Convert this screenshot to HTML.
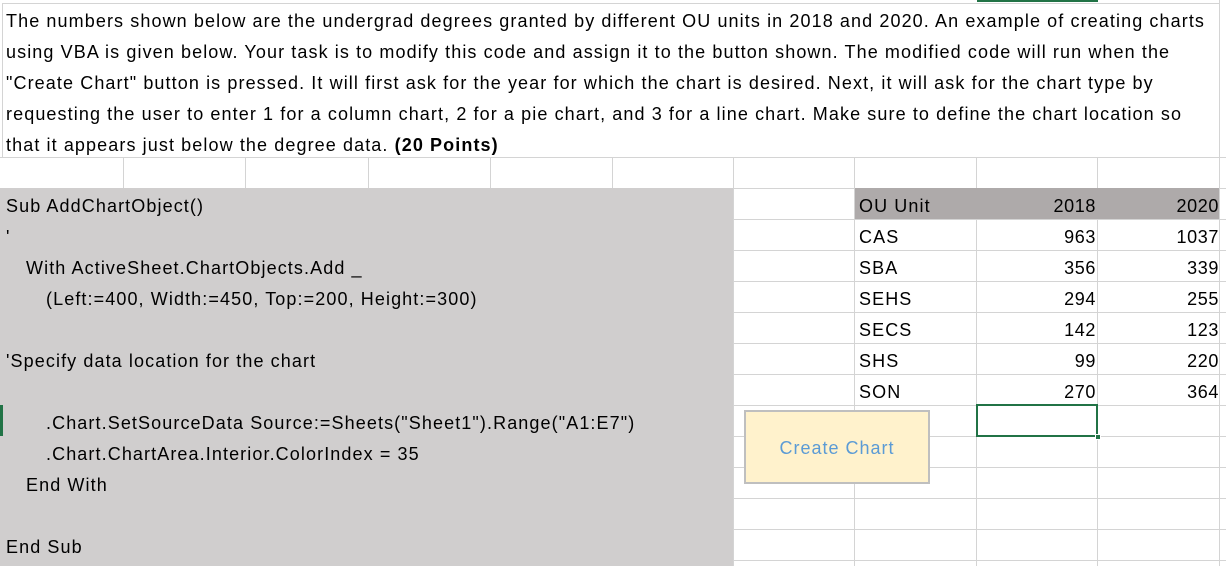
<!DOCTYPE html>
<html><head><meta charset="utf-8"><style>
*{margin:0;padding:0;box-sizing:border-box}
body{width:1226px;height:566px;overflow:hidden;background:#fff;position:relative;font-family:"Liberation Sans",sans-serif;font-size:18px;letter-spacing:1.1px;color:#000}
.a{position:absolute}
.vl{position:absolute;width:1px;background:#d4d4d4}
.hl{position:absolute;height:1px;background:#d4d4d4}
.t{position:absolute;left:6px;white-space:nowrap;line-height:31px}
.c{position:absolute;white-space:nowrap;line-height:31px}
.r{text-align:right;letter-spacing:0.6px}
</style></head><body>
<div class="hl" style="left:0;top:157px;width:1226px"></div>
<div class="hl" style="left:0;top:188px;width:1226px"></div>
<div class="vl" style="left:123px;top:157px;height:31px"></div>
<div class="vl" style="left:245px;top:157px;height:31px"></div>
<div class="vl" style="left:368px;top:157px;height:31px"></div>
<div class="vl" style="left:490px;top:157px;height:31px"></div>
<div class="vl" style="left:612px;top:157px;height:31px"></div>
<div class="vl" style="left:733px;top:157px;height:409px"></div>
<div class="vl" style="left:854px;top:157px;height:409px"></div>
<div class="vl" style="left:976px;top:157px;height:409px"></div>
<div class="vl" style="left:1097px;top:157px;height:409px"></div>
<div class="vl" style="left:1219px;top:0;height:566px"></div>
<div class="hl" style="left:733px;top:219px;width:493px"></div>
<div class="hl" style="left:733px;top:250px;width:493px"></div>
<div class="hl" style="left:733px;top:281px;width:493px"></div>
<div class="hl" style="left:733px;top:312px;width:493px"></div>
<div class="hl" style="left:733px;top:343px;width:493px"></div>
<div class="hl" style="left:733px;top:374px;width:493px"></div>
<div class="hl" style="left:733px;top:405px;width:493px"></div>
<div class="hl" style="left:733px;top:436px;width:493px"></div>
<div class="hl" style="left:733px;top:467px;width:493px"></div>
<div class="hl" style="left:733px;top:498px;width:493px"></div>
<div class="hl" style="left:733px;top:529px;width:493px"></div>
<div class="hl" style="left:733px;top:560px;width:493px"></div>
<div class="a" style="left:2px;top:3px;width:1218px;height:155px;border:1px solid #d4d4d4;background:#fff"></div>
<div class="a" style="left:977px;top:0;width:121px;height:2px;background:#217346"></div>
<div class="t" style="top:6px">The numbers shown below are the undergrad degrees granted by different OU units in 2018 and 2020. An example of creating charts</div>
<div class="t" style="top:37px">using VBA is given below. Your task is to modify this code and assign it to the button shown. The modified code will run when the</div>
<div class="t" style="top:68px">"Create Chart" button is pressed. It will first ask for the year for which the chart is desired. Next, it will ask for the chart type by</div>
<div class="t" style="top:99px">requesting the user to enter 1 for a column chart, 2 for a pie chart, and 3 for a line chart. Make sure to define the chart location so</div>
<div class="t" style="top:130px">that it appears just below the degree data. <b>(20 Points)</b></div>
<div class="a" style="left:0;top:188px;width:733px;height:378px;background:#d0cece"></div>
<div class="a" style="left:0;top:405px;width:3px;height:31px;background:#217346"></div>
<div class="c" style="left:6px;top:191px">Sub AddChartObject()</div>
<div class="c" style="left:6px;top:222px">'</div>
<div class="c" style="left:26px;top:253px">With ActiveSheet.ChartObjects.Add _</div>
<div class="c" style="left:46px;top:284px">(Left:=400, Width:=450, Top:=200, Height:=300)</div>
<div class="c" style="left:6px;top:346px">'Specify data location for the chart</div>
<div class="c" style="left:46px;top:408px">.Chart.SetSourceData Source:=Sheets("Sheet1").Range("A1:E7")</div>
<div class="c" style="left:46px;top:439px">.Chart.ChartArea.Interior.ColorIndex = 35</div>
<div class="c" style="left:26px;top:470px">End With</div>
<div class="c" style="left:6px;top:532px">End Sub</div>
<div class="a" style="left:855px;top:188px;width:364px;height:31px;background:#aeaaaa"></div>
<div class="c" style="left:859px;top:191px">OU Unit</div>
<div class="c r" style="left:976px;width:120px;top:191px">2018</div>
<div class="c r" style="left:1098px;width:121px;top:191px">2020</div>
<div class="c" style="left:859px;top:222px">CAS</div><div class="c r" style="left:976px;width:120px;top:222px">963</div><div class="c r" style="left:1098px;width:121px;top:222px">1037</div>
<div class="c" style="left:859px;top:253px">SBA</div><div class="c r" style="left:976px;width:120px;top:253px">356</div><div class="c r" style="left:1098px;width:121px;top:253px">339</div>
<div class="c" style="left:859px;top:284px">SEHS</div><div class="c r" style="left:976px;width:120px;top:284px">294</div><div class="c r" style="left:1098px;width:121px;top:284px">255</div>
<div class="c" style="left:859px;top:315px">SECS</div><div class="c r" style="left:976px;width:120px;top:315px">142</div><div class="c r" style="left:1098px;width:121px;top:315px">123</div>
<div class="c" style="left:859px;top:346px">SHS</div><div class="c r" style="left:976px;width:120px;top:346px">99</div><div class="c r" style="left:1098px;width:121px;top:346px">220</div>
<div class="c" style="left:859px;top:377px">SON</div><div class="c r" style="left:976px;width:120px;top:377px">270</div><div class="c r" style="left:1098px;width:121px;top:377px">364</div>
<div class="a" style="left:976px;top:404px;width:122px;height:33px;border:2px solid #217346"></div>
<div class="a" style="left:1095px;top:434px;width:6px;height:6px;background:#217346;border:1px solid #fff"></div>
<div class="a" style="left:744px;top:410px;width:186px;height:74px;background:#fff2cc;border:2px solid #bfbfbf;color:#5b9bd5;font-size:18px;letter-spacing:1px;text-align:center;line-height:72px">Create Chart</div>
</body></html>
